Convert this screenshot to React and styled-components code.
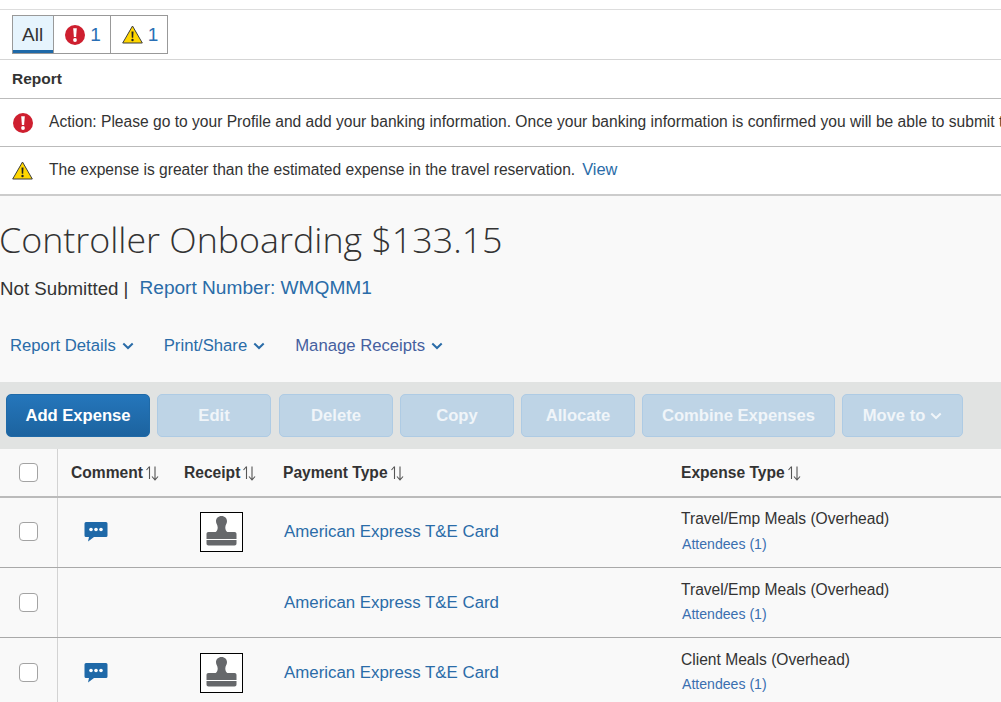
import React from 'react';
import styled, { createGlobalStyle } from 'styled-components';

const Global = createGlobalStyle`
  html, body { margin: 0; padding: 0; background: #f9f9f9; overflow: hidden; }
  body { font-family: "Liberation Sans", Arial, sans-serif; color: #333; }
`;
const Page = styled.div`width: 1001px; height: 702px; overflow: hidden; background: #f9f9f9;`;
const Alerts = styled.section`background: #fff; padding-top: 9px; border-bottom: 2px solid #ccc;`;
const TabBar = styled.div`
  border-top: 1px solid #ddd; border-bottom: 1px solid #d5d5d5;
  padding: 5px 0 5px 12px; height: 39px; display: flex;
`;
const Tabs = styled.div`display: flex; border: 1px solid #999; height: 37px;`;
const Tab = styled.div`
  display: flex; align-items: center; gap: 5px; font-size: 19px;
  padding: ${p => p.$active ? '0 10px 0 9px' : '0 9px 0 11px'};
  color: ${p => p.$active ? '#333' : '#2a6fb5'};
  background: ${p => p.$active ? '#e6f4fd' : '#fff'};
  border-left: ${p => p.$active ? 'none' : '1px solid #999'};
  box-shadow: ${p => p.$active ? 'inset 0 -3px 0 #1f69a8' : 'none'};
`;
const GroupHead = styled.div`
  font-size: 15.5px; font-weight: bold; height: 38px; line-height: 37px; padding-left: 12px;
  color: #333; border-bottom: 1px solid #bbb;
`;
const Alert = styled.div`
  display: flex; align-items: center; white-space: nowrap; overflow: hidden; height: 47px; padding-left: 12px;
  font-size: 15.6px; color: #333; box-sizing: content-box;
  border-bottom: ${p => p.$last ? 'none' : '1px solid #bbb'};
`;
const AlertText = styled.span`position: relative; top: -1px;`;
const AlertIcon = styled.span`display: flex; flex: none; width: 37px; padding-left: ${p => p.$pl ?? 0}px; box-sizing: border-box;`;
const ViewLink = styled.a`color: #2a6ca8; margin-left: 7px; font-size: 16.4px;`;
const Heading = styled.section`padding: 17px 0 0; height: 186px; box-sizing: border-box;`;
const Title = styled.h1`
  margin: 0 0 0 -1px; font: 300 35.8px/52px "Open Sans", sans-serif; color: #333; white-space: nowrap;
`;
const Status = styled.div`
  display: flex; margin-top: 11px; font-size: 18.7px; line-height: 26px; color: #333; white-space: nowrap;
`;
const ReportNo = styled.a`color: #2a6ca8; font-size: 19.1px; margin-left: 11px; position: relative; top: -1px;`;
const Menu = styled.nav`display: flex; gap: 30px; padding: 34px 0 0 10px; font-size: 16.7px; line-height: 20px;`;
const MenuItem = styled.a`
  display: flex; align-items: center; gap: 6px; color: ${p => p.$muted ? '#45609f' : '#2a6ca8'};
`;
const Toolbar = styled.div`
  display: flex; gap: 7px; height: 67px; background: #e1e3e2; padding: 12px 6px 0; box-sizing: border-box;
`;
const Btn = styled.button`
  height: 43px; width: ${p => p.$w}px; padding: 0; box-sizing: border-box; border-radius: 5px;
  margin-right: ${p => p.$mr ?? 0}px;
  display: flex; align-items: center; justify-content: center; gap: 5px;
  font: bold 16.6px "Liberation Sans", Arial, sans-serif; color: ${p => p.$primary ? '#fff' : '#f0f5f9'};
  background: ${p => p.$primary ? 'linear-gradient(#2576bb, #1c639f)' : '#bed4e6'};
  border: 1px solid ${p => p.$primary ? '#1f6aa8' : '#aecbe4'};
`;
const Row = styled.div`
  display: grid; grid-template-columns: 58px 113px 99px 398px 1fr; height: ${p => p.$h}px;
  border-bottom: ${p => p.$head ? '2px solid #bbb' : '1px solid #a9a9a9'}; box-sizing: border-box;
`;
const Cell = styled.div`
  display: flex; align-items: center; min-width: 0; white-space: nowrap;
  padding-left: ${p => p.$pl ?? 0}px;
  padding-bottom: ${p => p.$pb ?? 0}px;
  ${p => p.$check ? 'border-right: 1px solid #d3d3d3; padding-left: 19px;' : ''}
`;
const Check = styled.span`
  display: block; width: 19px; height: 19px; box-sizing: border-box; background: #fff; border: 1px solid #a3a3a3; border-radius: 4px;
`;
const HeadLabel = styled.span`font-size: 15.6px; font-weight: bold; color: #333; display: flex; align-items: center; gap: 2px;`;
const PayLink = styled.a`font-size: 16.85px; color: #2a6ca8;`;
const Stack = styled.div`display: flex; flex-direction: column; gap: ${p => p.$gap}px; align-self: flex-start;`;
const ExpType = styled.span`font-size: 15.6px; line-height: 20px; color: #333; margin-top: ${p => p.$top}px;`;
const Attendees = styled.a`font-size: 14.1px; line-height: 18px; color: #3a6fb0; margin-left: 1px;`;
const ReceiptBox = styled.div`
  width: 43px; height: 40px; box-sizing: border-box; border: 1px solid #000; background: #fff; display: flex; align-items: center; justify-content: center;
`;

const ErrorIcon = ({ s = 20 }) => (
  <svg width={s} height={s} viewBox="0 0 20 20">
    <circle cx="10" cy="10" r="10" fill="#ce1f2f" />
    <path d="M8.200 3.200h3.600l-.7 8.800H8.900z" fill="#fff" />
    <circle cx="10" cy="15" r="1.900" fill="#fff" />
  </svg>
);
const WarnIcon = () => (
  <svg width="21" height="19" viewBox="0 0 21 19">
    <path d="M10.500 1 20.300 18H.7z" fill="#ffd600" stroke="#3d3d3d" strokeWidth="1" />
    <path d="M9.500 6.500h2l-.3 6.200H9.800z" fill="#222" />
    <circle cx="10.500" cy="15" r="1.200" fill="#222" />
  </svg>
);
const Chevron = ({ c = 'currentColor' }) => (
  <svg width="12" height="8" viewBox="0 0 12 8">
    <path d="M1.300 1.500 6 6l4.700-4.500" fill="none" stroke={c} strokeWidth="2" />
  </svg>
);
const Sort = () => (
  <svg width="15" height="16" viewBox="0 0 15 16">
    <path d="M4.500 14V1.500M1.500 5l3-3.500" fill="none" stroke="#555" strokeWidth="1.100" />
    <path d="M10 1.500V15M13 11.500 10 15l-3-3.500" fill="none" stroke="#555" strokeWidth="1.100" />
  </svg>
);
const CommentIcon = () => (
  <svg width="24" height="21" viewBox="0 0 24 21">
    <path d="M2 1h20a1.500 1.500 0 0 1 1.500 1.500v12a1.500 1.500 0 0 1-1.500 1.500H10l-6 4.500 1-4.500H2a1.500 1.500 0 0 1-1.500-1.500v-12A1.500 1.500 0 0 1 2 1z" fill="#1f69a8" />
    <circle cx="7" cy="8.500" r="1.800" fill="#fff" /><circle cx="12" cy="8.500" r="1.800" fill="#fff" /><circle cx="17" cy="8.500" r="1.800" fill="#fff" />
  </svg>
);
const Stamp = () => (
  <svg width="33" height="34" viewBox="0 0 33 34">
    <path d="M16.500 1c3.300 0 5.500 2.400 5.500 5.200 0 2.400-1.700 3.800-1.700 6.300 0 2 .8 3.500 2 4.500h7.200c1.300 0 2 .9 2 2V24H1.500v-5c0-1.100.7-2 2-2h7.200c1.200-1 2-2.500 2-4.500 0-2.500-1.700-3.900-1.700-6.300C11 3.400 13.200 1 16.500 1z" fill="#66686b" />
    <path d="M1.500 25h30v3.500c0 1.200-.8 2-2 2h-26c-1.200 0-2-.8-2-2z" fill="#66686b" />
  </svg>
);

const rows = [
  { comment: true, receipt: true, type: 'Travel/Emp Meals (Overhead)', top: 11, gap: 6, lift: 2 },
  { comment: false, receipt: false, type: 'Travel/Emp Meals (Overhead)', top: 12, gap: 5, lift: 0 },
  { comment: true, receipt: true, type: 'Client Meals (Overhead)', top: 12, gap: 5, lift: 0 },
];

export default function App() {
  return (
    <Page>
      <Global />
      <Alerts>
        <TabBar>
          <Tabs>
            <Tab $active>All</Tab>
            <Tab><ErrorIcon />1</Tab>
            <Tab><WarnIcon />1</Tab>
          </Tabs>
        </TabBar>
        <GroupHead>Report</GroupHead>
        <Alert>
          <AlertIcon $pl={1}><ErrorIcon /></AlertIcon>
          <AlertText>Action: Please go to your Profile and add your banking information. Once your banking information is confirmed you will be able to submit this report.</AlertText>
        </Alert>
        <Alert $last>
          <AlertIcon><WarnIcon /></AlertIcon>
          <AlertText>The expense is greater than the estimated expense in the travel reservation.
          <ViewLink>View</ViewLink></AlertText>
        </Alert>
      </Alerts>
      <Heading>
        <Title>Controller Onboarding $133.15</Title>
        <Status>Not Submitted |<ReportNo>Report Number: WMQMM1</ReportNo></Status>
        <Menu>
          <MenuItem>Report Details <Chevron /></MenuItem>
          <MenuItem>Print/Share <Chevron /></MenuItem>
          <MenuItem $muted>Manage Receipts <Chevron c="#2a6ca8" /></MenuItem>
        </Menu>
      </Heading>
      <Toolbar>
        <Btn $primary $w={144}>Add Expense</Btn>
        <Btn $w={114} $mr={1}>Edit</Btn>
        <Btn $w={114}>Delete</Btn>
        <Btn $w={114}>Copy</Btn>
        <Btn $w={114}>Allocate</Btn>
        <Btn $w={193}>Combine Expenses</Btn>
        <Btn $w={121}>Move to <Chevron c="#f0f5f9" /></Btn>
      </Toolbar>
      <Row $head $h={49}>
        <Cell $check><Check /></Cell>
        <Cell $pl={13}><HeadLabel>Comment <Sort /></HeadLabel></Cell>
        <Cell $pl={13}><HeadLabel>Receipt <Sort /></HeadLabel></Cell>
        <Cell $pl={13}><HeadLabel>Payment Type <Sort /></HeadLabel></Cell>
        <Cell $pl={13}><HeadLabel>Expense Type <Sort /></HeadLabel></Cell>
      </Row>
      {rows.map((r, i) => (
        <Row key={i} $h={70}>
          <Cell $check $pb={r.lift}><Check /></Cell>
          <Cell $pl={26} $pb={r.lift}>{r.comment && <CommentIcon />}</Cell>
          <Cell $pl={29} $pb={r.lift}>{r.receipt && <ReceiptBox><Stamp /></ReceiptBox>}</Cell>
          <Cell $pl={14} $pb={r.lift}><PayLink>American Express T&amp;E Card</PayLink></Cell>
          <Cell $pl={13}>
            <Stack $gap={r.gap}>
              <ExpType $top={r.top}>{r.type}</ExpType>
              <Attendees>Attendees (1)</Attendees>
            </Stack>
          </Cell>
        </Row>
      ))}
    </Page>
  );
}
